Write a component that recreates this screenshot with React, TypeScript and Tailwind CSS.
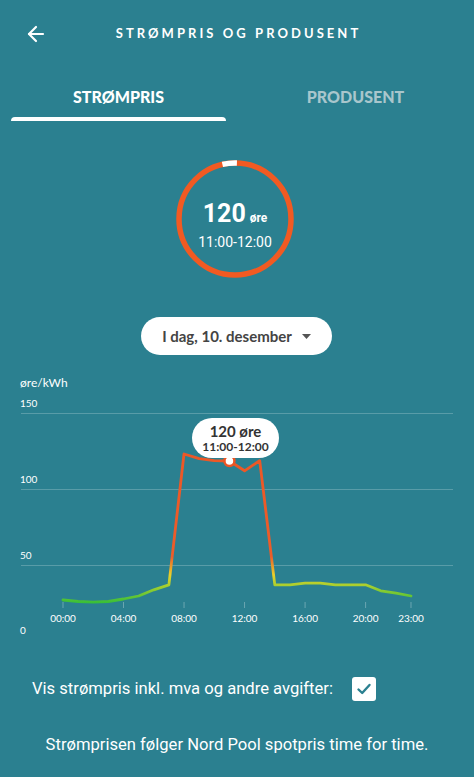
import { ArrowLeft } from 'lucide-react';

const prices = [27, 26, 25.6, 26, 27.6, 29.6, 33.7, 37, 123, 120, 118.6, 118.4, 112, 118.6, 37, 37, 38, 38, 37, 37, 37, 33, 31.5, 29.6];

const xOf = (h: number) => 63 + h * 15.13;
const yOf = (v: number) => 643 - v * 1.52;

function PriceRing() {
  const r = 56;
  const c = 2 * Math.PI * r;
  const white = c * (15 / 360);
  return (
    <div className="relative w-[122px] h-[122px]">
      <svg width="122" height="122" viewBox="0 0 122 122" className="absolute inset-0">
        <circle cx="61" cy="61" r={r} fill="none" stroke="#f15a22" strokeWidth="5.5" />
        <circle
          cx="61"
          cy="61"
          r={r}
          fill="none"
          stroke="#ffffff"
          strokeWidth="5.5"
          strokeDasharray={`${white} ${c}`}
          transform="rotate(-103 61 61)"
        />
      </svg>
      <div className="absolute inset-0 flex flex-col items-center justify-center text-white font-['Roboto',sans-serif] pt-[12px]">
        <div className="flex items-baseline gap-1">
          <span className="text-[25px] font-bold leading-none">120</span>
          <span className="text-[12px] font-bold">øre</span>
        </div>
        <span className="text-[14px] mt-[8px] leading-none">11:00-12:00</span>
      </div>
    </div>
  );
}

function Chart() {
  const pts = prices.map((v, i) => `${xOf(i).toFixed(1)},${yOf(v).toFixed(1)}`).join(' ');
  const ticks = [0, 4, 8, 12, 16, 20, 23];
  return (
    <svg width="474" height="265" viewBox="0 375 474 265" className="block">
      <defs>
        <linearGradient id="priceGrad" gradientUnits="userSpaceOnUse" x1="0" y1="643" x2="0" y2="415">
          <stop offset="0.15" stopColor="#1dbb3a" />
          <stop offset="0.24" stopColor="#a4cf2e" />
          <stop offset="0.29" stopColor="#ead02a" />
          <stop offset="0.37" stopColor="#ec5d2a" />
          <stop offset="1" stopColor="#ec5524" />
        </linearGradient>
      </defs>
      <g fontFamily="Lato, sans-serif" fill="#ffffff">
        <text x="20" y="389" fontSize="12">øre/kWh</text>
        <text x="20" y="409" fontSize="10">150</text>
        <text x="20" y="485" fontSize="10">100</text>
        <text x="20" y="561" fontSize="10">50</text>
        <text x="20" y="636" fontSize="10">0</text>
      </g>
      {[415.5, 491.5, 567.5].map((y) => (
        <line key={y} x1="21" x2="453" y1={y} y2={y} stroke="#ffffff" strokeOpacity="0.22" strokeWidth="1" />
      ))}
      {ticks.map((h) => (
        <line key={h} x1={xOf(h)} x2={xOf(h)} y1="604" y2="610" stroke="#ffffff" strokeOpacity="0.3" strokeWidth="1" />
      ))}
      <g fontFamily="Lato, sans-serif" fontSize="10" fill="#ffffff" textAnchor="middle">
        {ticks.map((h) => (
          <text key={h} x={xOf(h)} y="624">
            {String(h).padStart(2, '0')}:00
          </text>
        ))}
      </g>
      <polyline points={pts} fill="none" stroke="url(#priceGrad)" strokeWidth="2.8" strokeLinejoin="round" strokeLinecap="round" />
      <circle cx={xOf(11)} cy={yOf(118.4)} r="5" fill="#ffffff" stroke="#ec5524" strokeWidth="2.5" />
      <rect x="192" y="420" width="87" height="40" rx="20" fill="#ffffff" />
      <g fontFamily="Lato, sans-serif" fill="#333333" textAnchor="middle" fontWeight="bold">
        <text x="235.5" y="439" fontSize="15">120 øre</text>
        <text x="235.5" y="453" fontSize="12">11:00-12:00</text>
      </g>
    </svg>
  );
}

export default function App() {
  return (
    <div className="w-[474px] h-[777px] bg-[#2b8090] flex flex-col text-white overflow-hidden">
      <div className="h-[68px] relative flex items-center justify-center">
        <ArrowLeft className="absolute left-[24px] top-[22px] w-6 h-6" strokeWidth={2.2} />
        <h1 className="font-['Lato',sans-serif] font-bold text-[13px] tracking-[0.235em] pl-[3px]">STRØMPRIS OG PRODUSENT</h1>
      </div>

      <div className="flex h-[54px]">
        <div className="w-[237px] flex flex-col items-center">
          <span className="mt-[19px] font-['Lato',sans-serif] font-black text-[16px] leading-5 text-white">STRØMPRIS</span>
          <div className="mt-[10px] w-[215px] h-[4px] rounded-t-full bg-white" />
        </div>
        <div className="w-[237px] flex flex-col items-center">
          <span className="mt-[19px] font-['Lato',sans-serif] font-black text-[16px] leading-5 text-[#a9c6cc]">PRODUSENT</span>
        </div>
      </div>

      <div className="flex justify-center mt-[36px] ml-[-4px]">
        <PriceRing />
      </div>

      <div className="flex justify-center mt-[37px] ml-[-1px]">
        <button className="h-[38px] w-[191px] rounded-full bg-white flex items-center justify-center gap-[10px] text-[#444444] font-['Lato',sans-serif] font-bold text-[15px]">
          <span>I dag, 10. desember</span>
          <svg width="9" height="5" viewBox="0 0 9 5">
            <path d="M0 0 L9 0 L4.5 5 Z" fill="#555555" />
          </svg>
        </button>
      </div>

      <div className="mt-[18px]">
        <Chart />
      </div>

      <div className="flex items-center mt-[39px] pl-[32px] gap-[19px] font-['Roboto',sans-serif]">
        <span className="text-[16.6px]">Vis strømpris inkl. mva og andre avgifter:</span>
        <span className="w-[24px] h-[24px] rounded-[3px] bg-white flex items-center justify-center">
          <svg width="16" height="16" viewBox="0 0 16 16">
            <path d="M2.5 8.5 L6.2 12 L13.5 4" fill="none" stroke="#2b8090" strokeWidth="2.4" strokeLinecap="round" strokeLinejoin="round" />
          </svg>
        </span>
      </div>

      <p className="mt-[31px] text-center text-[16.6px] font-['Roboto',sans-serif]">
        Strømprisen følger Nord Pool spotpris time for time.
      </p>
    </div>
  );
}
